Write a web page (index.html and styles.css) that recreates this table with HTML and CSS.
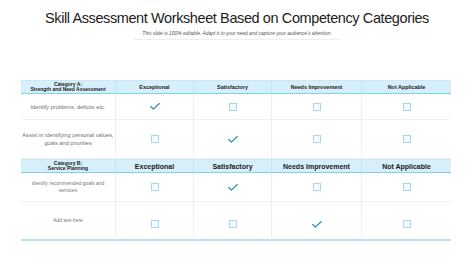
FILE: index.html
```html
<!DOCTYPE html>
<html>
<head>
<meta charset="utf-8">
<link rel="stylesheet" href="styles.css">
</head>
<body>
<header class="head">
  <h1 class="title">Skill Assessment Worksheet Based on Competency Categories</h1>
  <p class="sub">This slide is 100% editable. Adapt it to your need and capture your audience's attention.</p>
  <div class="rule"></div>
</header>
<div class="grid">
  <div class="hd cat">Category A:<br>Strength and Need Assessment</div>
  <div class="hd sm">Exceptional</div>
  <div class="hd sm">Satisfactory</div>
  <div class="hd sm">Needs Improvement</div>
  <div class="hd sm last">Not Applicable</div>

  <div class="c txt r1">Identify problems, deficits etc.</div>
  <div class="c r1"><svg class="chk" viewBox="0 0 10 7"><polyline points="0.6,3.6 3.4,6 9.4,0.6"/></svg></div>
  <div class="c r1"><span class="box"></span></div>
  <div class="c r1"><span class="box"></span></div>
  <div class="c r1 last"><span class="box"></span></div>

  <div class="c txt r2">Assist in identifying personal values,<br>goals and priorities</div>
  <div class="c r2"><span class="box"></span></div>
  <div class="c r2"><svg class="chk" viewBox="0 0 10 7"><polyline points="0.6,3.6 3.4,6 9.4,0.6"/></svg></div>
  <div class="c r2"><span class="box"></span></div>
  <div class="c r2 last"><span class="box"></span></div>

  <div class="hd cat hb">Category B:<br>Service Planning</div>
  <div class="hd lg hb">Exceptional</div>
  <div class="hd lg hb">Satisfactory</div>
  <div class="hd lg hb">Needs Improvement</div>
  <div class="hd lg hb last">Not Applicable</div>

  <div class="c txt sm5 r3">Identify recommended goals and<br>services</div>
  <div class="c r3"><span class="box"></span></div>
  <div class="c r3"><svg class="chk" viewBox="0 0 10 7"><polyline points="0.6,3.6 3.4,6 9.4,0.6"/></svg></div>
  <div class="c r3"><span class="box"></span></div>
  <div class="c r3 last"><span class="box"></span></div>

  <div class="c txt sm5 r4 end">Add text here</div>
  <div class="c r4 end low"><span class="box"></span></div>
  <div class="c r4 end low"><span class="box"></span></div>
  <div class="c r4 end low"><svg class="chk" viewBox="0 0 10 7"><polyline points="0.6,3.6 3.4,6 9.4,0.6"/></svg></div>
  <div class="c r4 end low last"><span class="box"></span></div>
</div>
</body>
</html>
```
FILE: styles.css
```css
html, body {
  margin: 0;
  padding: 0;
  background: #ffffff;
  font-family: "Liberation Sans", Arial, sans-serif;
}
.head {
  display: flex;
  flex-direction: column;
  align-items: center;
  padding-top: 9px;
  height: 71px;
  box-sizing: border-box;
}
.title {
  margin: 0;
  font-size: 14.5px;
  font-weight: normal;
  letter-spacing: -0.4px;
  color: #1c1c1c;
  line-height: 18px;
}
.sub {
  margin: 3px 0 0;
  font-size: 4.9px;
  font-style: italic;
  color: #555;
  line-height: 7px;
}
.rule {
  margin-top: 2px;
  width: 208px;
  height: 1px;
  background: #eeeeee;
}
.grid {
  margin-left: 21px;
  margin-top: 9px;
  width: 430px;
  display: grid;
  grid-template-columns: 95px 78px 78px 90px 89px;
  grid-template-rows: 14px 26px 39px 14px 29px 39px;
}
.hd {
  background: #d6effa;
  border-top: 1px solid #c9e9f5;
  border-bottom: 1px solid #7fd0ea;
  border-right: 1px solid #c5e6f2;
  display: flex;
  align-items: center;
  justify-content: center;
  text-align: center;
  font-weight: bold;
  color: #1a1a1a;
  box-sizing: border-box;
}
.hd.last, .c.last { border-right: none; }
.cat {
  font-size: 5px;
  line-height: 5.5px;
}
.sm { font-size: 5.4px; }
.lg { font-size: 7px; }
.c {
  display: flex;
  align-items: center;
  justify-content: center;
  border-right: 1px solid #eaeff1;
  border-bottom: 1px solid #eef1f2;
  box-sizing: border-box;
}
.txt {
  text-align: center;
  font-size: 5.7px;
  line-height: 8px;
  color: #6f6f6f;
  white-space: nowrap;
}
.sm5 {
  font-size: 5px;
  line-height: 7.5px;
  color: #777;
}
.end { border-bottom: 2px solid #b7e3f3; }
.low { padding-top: 7px; }
.box {
  width: 8px;
  height: 8px;
  border: 1px solid #a8d4e6;
  background: #f4fbfe;
  box-sizing: border-box;
}
.chk {
  width: 10px;
  height: 7px;
  fill: none;
  stroke: #3b93bd;
  stroke-width: 1.3;
  stroke-linecap: round;
  stroke-linejoin: round;
}
```
